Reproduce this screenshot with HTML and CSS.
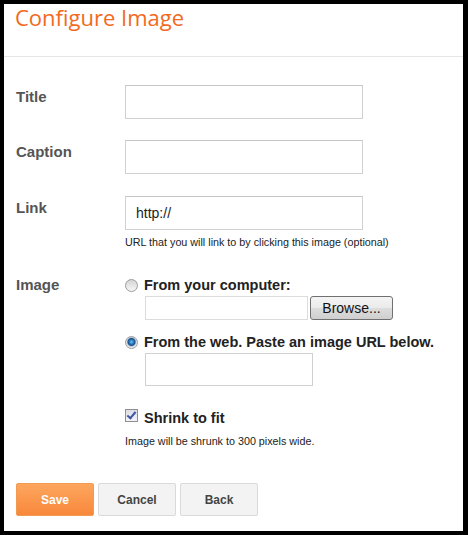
FILE: index.html
```html
<!DOCTYPE html>
<html>
<head>
<meta charset="utf-8">
<link rel="stylesheet" href="styles.css">
</head>
<body>
<div class="panel">
  <div class="header"><h1 class="title">Configure Image</h1></div>
  <form class="form">
    <div class="row row-title">
      <label class="label">Title</label>
      <div class="field"><input class="text" type="text"></div>
    </div>
    <div class="row row-caption">
      <label class="label">Caption</label>
      <div class="field"><input class="text" type="text"></div>
    </div>
    <div class="row row-link">
      <label class="label">Link</label>
      <div class="field">
        <input class="text" type="text" value="http://">
        <div class="hint hint-link">URL that you will link to by clicking this image (optional)</div>
      </div>
    </div>
    <div class="row row-image">
      <label class="label label-image">Image</label>
      <div class="field">
        <label class="choice"><input class="radio" type="radio" name="src"><span>From your computer:</span></label>
        <div class="file-row">
          <input class="file-text" type="text">
          <button type="button" class="browse">Browse...</button>
        </div>
        <label class="choice choice-web"><input class="radio" type="radio" name="src" checked><span>From the web. Paste an image URL below.</span></label>
        <div class="sub"><input class="url" type="text"></div>
        <label class="choice choice-check"><input class="check" type="checkbox" checked><span>Shrink to fit</span></label>
        <div class="hint hint-shrink">Image will be shrunk to 300 pixels wide.</div>
      </div>
    </div>
    <div class="actions">
      <button type="button" class="btn btn-save">Save</button>
      <button type="button" class="btn btn-plain">Cancel</button>
      <button type="button" class="btn btn-plain">Back</button>
    </div>
  </form>
</div>
</body>
</html>
```
FILE: styles.css
```css
html, body {
  margin: 0;
  padding: 0;
  background: #000;
}

.panel {
  margin: 4px 5px 4px 4px;
  height: 527px;
  background: #fff;
  font-family: "Liberation Sans", Arial, sans-serif;
}

.header {
  height: 52px;
  padding: 0 11px;
  border-bottom: 1px solid #e6e6e6;
}

.title {
  margin: 0;
  font: 400 22px/26px "Open Sans", "Liberation Sans", sans-serif;
  color: #f26a21;
}

.form {
  padding: 28px 12px 0;
}

.row {
  display: flex;
}

.row-title { margin-bottom: 21px; }
.row-caption { margin-bottom: 22px; }
.row-link { margin-bottom: 27px; }

.label {
  flex: none;
  width: 109px;
  padding-top: 3px;
  font: bold 15px/18px "Liberation Sans", Arial, sans-serif;
  color: #555;
}

.label-image { padding-top: 0; }

.field {
  display: flex;
  flex-direction: column;
  align-items: flex-start;
}

.text {
  display: block;
  box-sizing: border-box;
  width: 238px;
  height: 34px;
  margin: 0;
  padding: 0 10px;
  border: 1px solid #d0d0d0;
  border-top-color: #c6c6c6;
  font: 14px "Liberation Sans", Arial, sans-serif;
  color: #222;
  outline: none;
}

.hint {
  font: 10.75px/13px "Liberation Sans", Arial, sans-serif;
  color: #222;
}

.hint-link { margin-top: 6px; }
.hint-shrink { margin-top: 8px; }

.choice {
  display: flex;
  align-items: center;
  gap: 6px;
  font: bold 14.5px/18px "Liberation Sans", Arial, sans-serif;
  color: #222;
}

.choice-web { margin-top: 13px; }
.choice-check { margin-top: 23px; align-items: flex-start; }

.radio {
  appearance: none;
  -webkit-appearance: none;
  box-sizing: border-box;
  width: 13px;
  height: 13px;
  margin: 0;
  border-radius: 50%;
  border: 1px solid #9c9c9c;
  background: linear-gradient(#d4d4d4, #f7f7f7);
}

.radio:checked {
  background: radial-gradient(circle at 50% 45%, #7fc0ee 0, #2f7fc4 2px, #16508a 3.5px, #b9c9d8 4.5px, #eeeeee 5.5px);
}

.check {
  appearance: none;
  -webkit-appearance: none;
  position: relative;
  box-sizing: border-box;
  width: 13px;
  height: 13px;
  margin: 0;
  border: 1px solid #8d8f93;
  background: linear-gradient(#dcdde3, #f4f4f6);
}

.check:checked::after {
  content: "";
  position: absolute;
  left: 3px;
  top: 0;
  width: 3px;
  height: 7px;
  border-right: 2px solid #3d55a5;
  border-bottom: 2px solid #3d55a5;
  transform: rotate(40deg);
}

.file-row {
  display: flex;
  gap: 2px;
  margin-top: 2px;
  padding-left: 20px;
}

.file-text {
  box-sizing: border-box;
  width: 163px;
  height: 24px;
  margin: 0;
  border: 1px solid #dcdcdc;
  outline: none;
}

.browse {
  box-sizing: border-box;
  width: 83px;
  height: 24px;
  margin: 0;
  padding: 0;
  border: 1px solid #707070;
  border-radius: 3px;
  background: linear-gradient(#f4f4f4 0%, #ebebeb 50%, #dddddd 51%, #cfcfcf 100%);
  font: 14px "Liberation Sans", Arial, sans-serif;
  color: #111;
}

.sub {
  margin-top: 2px;
  padding-left: 20px;
}

.url {
  display: block;
  box-sizing: border-box;
  width: 168px;
  height: 33px;
  margin: 0;
  border: 1px solid #d0d0d0;
  outline: none;
}

.actions {
  display: flex;
  gap: 4px;
  margin-top: 35px;
}

.btn {
  box-sizing: border-box;
  width: 78px;
  height: 33px;
  margin: 0;
  padding: 0;
  border-radius: 2px;
  font: bold 12px "Liberation Sans", Arial, sans-serif;
}

.btn-save {
  border: 1px solid #f39a52;
  background: linear-gradient(#fda65e, #f8883b);
  color: #fff;
}

.btn-plain {
  border: 1px solid #dadada;
  background: #f3f3f3;
  color: #444;
}
```
